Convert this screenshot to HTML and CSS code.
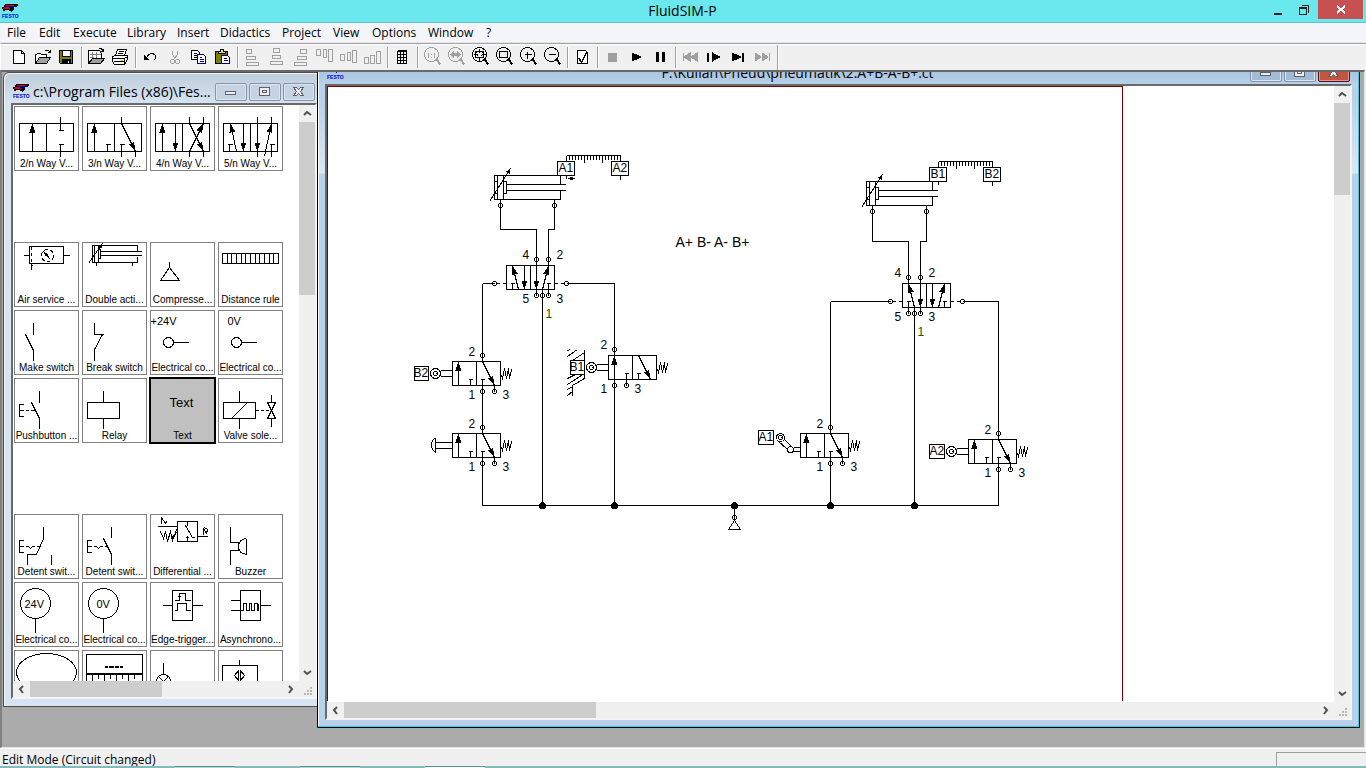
FILE: index.html
```
<!doctype html>

<html lang="en">

<head>
  <meta charset="utf-8">

  <title>FluidSIM-P</title>

  <link rel="stylesheet" href="styles.css">
</head>

<body>

  <!-- shared symbols -->
  <svg class="defs" width="0" height="0" aria-hidden="true">
    <defs>
      <marker id="head" markerUnits="userSpaceOnUse" markerWidth="10" markerHeight="8" refX="9" refY="4" orient="auto">
        <path d="M9 4L0 1V7Z" fill="#000" />
      </marker>
      <marker id="head-small" markerUnits="userSpaceOnUse" markerWidth="6" markerHeight="6" refX="5" refY="3" orient="auto">
        <path d="M5 3L0 1V5Z" fill="#000" />
      </marker>

      <g id="logo">
        <path d="M3 0H16V2H15V3H12V5H9V6H3V7H1V5H0V3H2V1H3Z" fill="#000" />
        <path d="M4 1H12V2H4ZM1 4H8V5H1ZM2 3H7V4H2Z" fill="#e00000" />
        <path d="M8 2H15V3H8ZM4 2H8V3H4Z" fill="#0000e0" />
        <path d="M9 5H12V6H11V7H10V8H9V7H7V6H9Z" fill="#000" />
        <text class="logo-text" x="0" y="14">FESTO</text>
      </g>

      <g id="cylinder">
        <path d="M66 9V0H0V24H66V15M3 0V24M9 0V24M0 6H3M0 18H3M9 6H12V18H9M12 9H71M12 15H71M6 24V30M60 24V30" />
        <path d="M-5 26L16 -7" marker-end="url(#head-small)" />
        <circle cx="6" cy="30" r="2" />
        <circle cx="60" cy="30" r="2" />
      </g>

      <g id="rule">
        <path d="M0 0H54M0 0V6M18 0V7M36 0V7M54 0V6M3 0V4M6 0V4M9 0V4M12 0V4M15 0V4M21 0V4M24 0V4M27 0V4M30 0V4M33 0V4M39 0V4M42 0V4M45 0V4M48 0V4M51 0V4" />
        <path d="M0 20V23M54 20V24" />
        <rect class="paper" x="-9" y="6" width="17" height="14" />
        <rect class="paper" x="45" y="6" width="17" height="14" />
      </g>

      <g id="spring">
        <path d="M0 12L2 17L4 7L6 17L8 7L9 17L11 8" />
      </g>

      <g id="roller">
        <circle cx="0" cy="0" r="5" />
        <circle cx="0" cy="0" r="2" />
        <path d="M0 0H1M5 -3H17M5 3H17" />
      </g>

      <g id="valve-closed">
        <path d="M0 0H48V24H0ZM24 0V24M16 18H20M18 18V24M28 18H32M30 18V30M42 24V30M30 -6V0" />
        <path d="M6 24V0" marker-end="url(#head)" />
        <path d="M30 0L42 24" marker-end="url(#head)" />
        <circle cx="30" cy="-6" r="2" />
        <circle cx="30" cy="30" r="2" />
        <circle cx="42" cy="30" r="2" />
        <use href="#spring" x="48" />
        <g class="port">
          <text x="16" y="-6">2</text>
          <text x="16" y="37">1</text>
          <text x="50" y="37">3</text>
        </g>
      </g>
    </defs>
  </svg>

  <header class="titlebar">
    <svg class="logo" width="18" height="15"><use href="#logo" /></svg>
    <h1>FluidSIM-P</h1>
    <div class="titlebar-buttons">
      <button aria-label="Minimize"><svg width="12" height="12"><path d="M2 9H10V11H2Z" fill="#222" /></svg></button>
      <button aria-label="Restore"><svg width="12" height="12" viewBox="-.5 -.5 12 12"><path d="M1 3H8V10H1ZM1 4H8M3 1H10V8" fill="none" stroke="#222" /></svg></button>
      <button class="close" aria-label="Close"><svg width="10" height="10"><path d="M1 1L9 8M9 1L1 8" stroke="#fff" stroke-width="2" /></svg></button>
    </div>
  </header>

  <nav class="menu">
    <button>File</button>
    <button>Edit</button>
    <button>Execute</button>
    <button>Library</button>
    <button>Insert</button>
    <button>Didactics</button>
    <button>Project</button>
    <button>View</button>
    <button>Options</button>
    <button>Window</button>
    <button>?</button>
  </nav>

  <div class="toolbar">
    <button aria-label="New"><svg viewBox="-.5 -.5 24 24"><path class="paper" d="M7 5H15L18 8V18H7Z" /><path d="M15 5V8H18" /></svg></button>
    <button aria-label="Open"><svg viewBox="-.5 -.5 24 24"><path class="paper" d="M5 18V9H6L7 8H10L11 9H16V12" /><path class="gray" d="M5 18L9 12H20L16 18Z" /><path d="M14 6Q17 3 20 7M20 4V7H17" /></svg></button>
    <button aria-label="Save"><svg viewBox="-.5 -.5 24 24"><path class="olive" d="M5 5H18V18H6L5 17Z" /><rect class="paper" x="8" y="5" width="8" height="6" /><path class="black" d="M8 14H16V18H8Z" /><path stroke="#fff" d="M14 15V17" /></svg></button>
    <span class="sep"></span>
    <button aria-label="Preview"><svg viewBox="-.5 -.5 24 24"><path class="paper" d="M4 18V5H15L17 8V12" /><path stroke="#808080" d="M5 9H16M5 12H9M8 6V13M12 6V12" /><path class="gray" d="M4 18L8 13H20L16 18Z" /><path d="M14 4Q16 1 19 6M19 3V6H16" /></svg></button>
    <button aria-label="Print"><svg viewBox="-.5 -.5 24 24"><path class="paper" d="M7 10L9 4H18L16 10Z" /><path d="M10 6H15M9 8H14" /><path class="paper" d="M4 11L7 10H19V14L16 19H6L4 16Z" /><path d="M4 13H16L19 11M5 16H16M16 13V18" /><path stroke="#e0d000" d="M11 15H14" /></svg></button>
    <span class="sep"></span>
    <button aria-label="Undo"><svg viewBox="-.5 -.5 24 24"><path d="M8 12Q12 6 16 9Q18 11 16 15" /><path class="black" d="M6 10V14H10Z" /></svg></button>
    <button aria-label="Cut" disabled><svg viewBox="-.5 -.5 24 24"><path d="M10 5V9L13 14M15 5V9L11 14" /><circle cx="10" cy="16" r="2" /><circle cx="15" cy="16" r="2" /></svg></button>
    <button aria-label="Copy"><svg viewBox="-.5 -.5 24 24"><path class="paper" d="M5 5H11L13 7V14H5Z" /><path d="M7 8H10M7 10H11M7 12H11" /><path class="paper navy" d="M11 9H17L19 11V18H11Z" /><path class="navy" d="M13 12H15M13 14H17M13 16H17" /></svg></button>
    <button aria-label="Paste"><svg viewBox="-.5 -.5 24 24"><path class="olive" d="M5 6H17V18H5Z" /><path class="yellow" d="M8 8V6H10V4H13V6H15V8Z" /><path class="paper navy" d="M11 10H17L19 12V18H11Z" /><path class="navy" d="M13 13H16M13 15H17" /></svg></button>
    <span class="sep"></span>
    <button aria-label="Align left" disabled><svg viewBox="-.5 -.5 24 24"><path d="M6 4H11V8H6ZM6 11H15V14H6ZM6 17H18V20H6Z" /></svg></button>
    <button aria-label="Align center" disabled><svg viewBox="-.5 -.5 24 24"><path d="M9 3H15V7H9ZM8 10H16V13H8ZM6 16H18V19H6Z" /></svg></button>
    <button aria-label="Align right" disabled><svg viewBox="-.5 -.5 24 24"><path d="M12 4H18V8H12ZM9 11H18V14H9ZM6 17H18V20H6Z" /></svg></button>
    <button aria-label="Align top" disabled><svg viewBox="-.5 -.5 24 24"><path d="M4 4H8V10H4ZM11 4H14V12H11ZM16 4H20V16H16Z" /></svg></button>
    <button aria-label="Align middle" disabled><svg viewBox="-.5 -.5 24 24"><path d="M4 9H8V15H4ZM11 7H14V15H11ZM16 5H20V17H16Z" /></svg></button>
    <button aria-label="Align bottom" disabled><svg viewBox="-.5 -.5 24 24"><path d="M4 12H8V18H4ZM10 10H14V18H10ZM16 6H20V18H16Z" /></svg></button>
    <span class="sep"></span>
    <button aria-label="Grid"><svg viewBox="-.5 -.5 24 24"><path d="M7 6H16V18H7ZM10 6V18M13 6V18M7 9H16M7 12H16M7 15H16" /><path d="M7 5H16" /></svg></button>
    <span class="sep"></span>
    <button aria-label="Actual size" disabled><svg viewBox="-.5 -.5 24 24"><circle cx="11" cy="9" r="7" /><path class="thick" d="M16 14L20 19" /><path d="M8 7V12M11 8V9M11 11V12M14 7V12" /></svg></button>
    <button aria-label="Fit width" disabled><svg viewBox="-.5 -.5 24 24"><circle cx="11" cy="9" r="7" /><path class="thick" d="M16 14L20 19" /><path class="fill" d="M6 9L9 6V8H13V6L16 9L13 12V10H9V12Z" /></svg></button>
    <button aria-label="Fit circuit"><svg viewBox="-.5 -.5 24 24"><circle cx="11" cy="9" r="7" /><path class="thick" d="M16 14L20 19" /><path d="M7 6H15V12H7ZM5 9H9M13 9H17M11 3V7M11 11V15M8 7L9 8M14 7L13 8M8 11L9 10M14 11L13 10" /></svg></button>
    <button aria-label="Zoom window"><svg viewBox="-.5 -.5 24 24"><circle cx="11" cy="9" r="7" /><path class="thick" d="M16 14L20 19" /><path d="M7 6H15V12H7Z" /></svg></button>
    <button aria-label="Zoom in"><svg viewBox="-.5 -.5 24 24"><circle cx="11" cy="9" r="7" /><path class="thick" d="M16 14L20 19" /><path d="M8 9H15M11 6V13" /></svg></button>
    <button aria-label="Zoom out"><svg viewBox="-.5 -.5 24 24"><circle cx="11" cy="9" r="7" /><path class="thick" d="M16 14L20 19" /><path d="M8 9H15" /></svg></button>
    <span class="sep"></span>
    <button aria-label="Check"><svg viewBox="-.5 -.5 24 24"><path class="paper" d="M7 5H15L17 7V18H7Z" /><path d="M8 13L11 17L16 7M9 13L11 15" /></svg></button>
    <span class="sep"></span>
    <button aria-label="Stop" disabled><svg viewBox="0 0 24 24"><path class="fill" d="M8 8H16V16H8Z" /></svg></button>
    <button aria-label="Start"><svg viewBox="0 0 24 24"><path class="fill" d="M8 8L17 12L8 16Z" /></svg></button>
    <button aria-label="Pause"><svg viewBox="-.5 -.5 24 24"><path class="fill" d="M8 7H10V16H8ZM14 7H16V16H14Z" /></svg></button>
    <span class="sep"></span>
    <button aria-label="Rewind" disabled><svg viewBox="0 0 24 24"><path class="fill" d="M5 8V16M12 8L6 12L12 16ZM19 8L13 12L19 16Z" /></svg></button>
    <button aria-label="Step"><svg viewBox="0 0 24 24"><path class="fill" d="M5 8H6V16H5ZM10 7V17M10 8L18 12L10 16Z" /></svg></button>
    <button aria-label="Next"><svg viewBox="0 0 24 24"><path class="fill" d="M6 8L15 12L6 16ZM16 8H17V16H16Z" /></svg></button>
    <button aria-label="Forward" disabled><svg viewBox="0 0 24 24"><path class="fill" d="M5 8L11 12L5 16ZM12 8L18 12L12 16ZM19 8V16" /></svg></button>
    <span class="sep end"></span>
  </div>

  <main class="workspace">

    <section class="window library">
      <div class="window-title">
        <svg class="logo" width="18" height="15"><use href="#logo" /></svg>
        <h2>c:\Program Files (x86)\Fes...</h2>
        <div class="window-buttons">
          <button aria-label="Minimize"><svg width="12" height="10" viewBox="-.5 -.5 12 10"><path d="M0 4H10V7H0Z" /></svg></button>
          <button aria-label="Maximize"><svg width="12" height="10" viewBox="-.5 -.5 12 10"><path d="M0 0H10V8H0ZM3 3H7V5H3Z" /></svg></button>
          <button aria-label="Close"><svg width="12" height="10" viewBox="-.5 -.5 12 10"><path d="M0 0H3L5 2L7 0H10L7 4L10 8H7L5 6L3 8H0L3 4Z" /></svg></button>
        </div>
      </div>
      <div class="window-body">
        <div class="view">
          <div class="tiles">
            <button class="tile"><svg viewBox=".5 .5 63 50"><path d="M5 17H59V45H5ZM32 17V45M46 10V24M44 24H49M46 38V50M44 38H49" /><path d="M18 45V17" marker-end="url(#head)" /></svg><span>2/n Way V...</span></button>
            <button class="tile"><svg viewBox=".5 .5 63 50"><path d="M5 17H59V45H5ZM32 17V45M23 38H28M25 38V45M39 10V17M37 38H42M39 38V50M53 45V50" /><path d="M12 45V17" marker-end="url(#head)" /><path d="M39 17L53 45" marker-end="url(#head)" /></svg><span>3/n Way V...</span></button>
            <button class="tile"><svg viewBox=".5 .5 63 50"><path d="M5 17H59V45H5ZM32 17V45M39 10V17M53 10V17M39 45V50M53 45V50" /><path d="M12 45V17" marker-end="url(#head)" /><path d="M25 17V45" marker-end="url(#head)" /><path d="M39 17L53 45" marker-end="url(#head)" /><path d="M39 45L53 17" marker-end="url(#head)" /></svg><span>4/n Way V...</span></button>
            <button class="tile"><svg viewBox=".5 .5 63 50"><path d="M5 17H59V45H5ZM32 17V45M9 38H14M11 38V45M39 10V17M53 10V17M39 45V50M46 50L47 45M51 38H56M53 38V50" /><path d="M18 45L12 17" marker-end="url(#head)" /><path d="M25 17V45" marker-end="url(#head)" /><path d="M39 17V45" marker-end="url(#head)" /><path d="M47 45L53 17" marker-end="url(#head)" /></svg><span>5/n Way V...</span></button>

            <button class="tile group"><svg viewBox=".5 .5 63 50"><path d="M15 4H49V21H15ZM9 13H15M49 13H55M17 21V27M16 23H18" /><path stroke-dasharray="3 3" d="M17 4V21" /><circle cx="33" cy="13" r="6" stroke-dasharray="4 2" /><path d="M36 17L29 9" marker-end="url(#head-small)" /></svg><span>Air service ...</span></button>
            <button class="tile group"><svg viewBox=".5 .5 63 50"><path d="M55 9V3H10V20H55V14M12 3V20M16 3V20M18 7V16H16V7ZM18 9H59M18 13H59M14 20V23M50 20V23" /><path d="M6 21L20 1" marker-end="url(#head-small)" /></svg><span>Double acti...</span></button>
            <button class="tile group"><svg viewBox=".5 .5 63 50"><path d="M19 19V25L29 38H10L19 25" /></svg><span>Compresse...</span></button>
            <button class="tile group"><svg viewBox=".5 .5 63 50"><path d="M4 11H60V21H4ZM9 11V21M13 11V21M18 11V21M23 11V21M27 11V21M32 11V21M37 11V21M41 11V21M46 11V21M51 11V21M55 11V21" /></svg><span>Distance rule</span></button>

            <button class="tile"><svg viewBox=".5 .5 63 50"><path d="M19 12V24M11 24L19 40V52" /></svg><span>Make switch</span></button>
            <button class="tile"><svg viewBox=".5 .5 63 50"><path d="M12 12V24H21M20 24L12 39V52" /></svg><span>Break switch</span></button>
            <button class="tile"><svg viewBox=".5 .5 63 50"><text x="0" y="14">+24V</text><circle cx="18" cy="32" r="5" /><path d="M23 32H38" /></svg><span>Electrical co...</span></button>
            <button class="tile"><svg viewBox=".5 .5 63 50"><text x="9" y="14">0V</text><circle cx="18" cy="32" r="5" /><path d="M23 32H38" /></svg><span>Electrical co...</span></button>

            <button class="tile"><svg viewBox=".5 .5 63 50"><path d="M9 26H5V38H9M5 32H9M11 32H14M16 32H20M25 12V24M17 24L25 40V52" /></svg><span>Pushbutton ...</span></button>
            <button class="tile"><svg viewBox=".5 .5 63 50"><path d="M5 24H37V40H5ZM21 12V24M21 40V52" /></svg><span>Relay</span></button>
            <button class="tile selected"><svg viewBox=".5 .5 63 50"><text class="big" x="19" y="28">Text</text></svg><span>Text</span></button>
            <button class="tile"><svg viewBox=".5 .5 63 50"><path d="M5 24H37V40H5ZM21 12V24M21 40V52M13 40L29 24M37 32H40M42 32H45M47 32H50M53 16V24M49 24H57L49 40H57ZM53 40V48" /></svg><span>Valve sole...</span></button>

            <button class="tile group"><svg viewBox=".5 .5 63 50"><path d="M9 26H5V38H9M5 32H9M11 32H14L16 34L18 32H20M22 32H25M29 12V24L22 40H13V52M37 40V52" /></svg><span>Detent swit...</span></button>
            <button class="tile group"><svg viewBox=".5 .5 63 50"><path d="M9 26H5V38H9M5 32H9M11 32H14L16 34L18 32H20M22 32H25M29 12V23M21 24L29 40V52" /></svg><span>Detent swit...</span></button>
            <button class="tile group"><svg viewBox=".5 .5 63 50"><path d="M27 7H47V27H27ZM7 12H27M10 17L13 24L15 17L17 27L20 17L22 26L27 13M20 25L27 17M37 7V11M35 11L42 23H44M37 27V22L35 24M37 22L39 24M47 22H57M11 9V3L15 9L16 7M53 20V14L56 19L57 15L54 13" /></svg><span>Differential ...</span></button>
            <button class="tile group"><svg viewBox=".5 .5 63 50"><path d="M12 12V28H21M21 36H12V52M28 24V40Q20 39 20 32Q20 25 28 24" /></svg><span>Buzzer</span></button>

            <button class="tile"><svg viewBox=".5 .5 63 50"><circle cx="21" cy="21" r="15" /><path d="M21 36V51" /><text x="10" y="25">24V</text></svg><span>Electrical co...</span></button>
            <button class="tile"><svg viewBox=".5 .5 63 50"><circle cx="21" cy="21" r="15" /><path d="M21 36V51" /><text x="14" y="25">0V</text></svg><span>Electrical co...</span></button>
            <button class="tile"><svg viewBox=".5 .5 63 50"><path d="M22 8H42V38H22ZM12 23H22M42 23H52M24 18H29V11H35V18H40M27 15L29 13L31 15M24 28H27V21H36V28H40" /></svg><span>Edge-trigger...</span></button>
            <button class="tile"><svg viewBox=".5 .5 63 50"><path d="M22 8H42V38H22ZM12 18H22M12 28H22M42 23H52M22 28H25V21H28V28H31V21H33V28H36V21H39V28H40V21" /></svg><span>Asynchrono...</span></button>

            <button class="tile" aria-label="Indicator"><svg viewBox=".5 .5 63 50"><ellipse cx="32" cy="22" rx="30" ry="19" /></svg></button>
            <button class="tile" aria-label="Display"><svg viewBox=".5 .5 63 50"><path d="M4 4H60V40H4ZM4 23H60M4 24H60M10 23V30M16 23V28M22 23V30M28 23V28M34 23V30M40 23V28M46 23V30M52 23V28" /><path stroke-width="2" stroke-dasharray="3 1 5 1 4 1" d="M22 16H41" /></svg></button>
            <button class="tile" aria-label="Lamp"><svg viewBox=".5 .5 63 50"><path d="M13 12V24M8 26L18 36M18 26L8 36" /><circle cx="13" cy="31" r="7" /></svg></button>
            <button class="tile" aria-label="Sensor"><svg viewBox=".5 .5 63 50"><path d="M4 15H39V40H4ZM21 9V15M20 20L16 25L20 30ZM22 20L26 25L22 30Z" /></svg></button>
          </div>
        </div>
        <div class="scroll vertical">
          <button aria-label="Scroll up"><svg viewBox="0 0 9 9"><path d="M1 6L4 3L8 6" /></svg></button>
          <div class="thumb library-rows"></div>
          <button class="last" aria-label="Scroll down"><svg viewBox="0 0 9 9"><path d="M1 3L4 6L8 3" /></svg></button>
        </div>
        <div class="scroll horizontal">
          <button aria-label="Scroll left"><svg viewBox="0 0 9 9"><path d="M6 1L3 4L6 8" /></svg></button>
          <div class="thumb library-cols"></div>
          <button class="last" aria-label="Scroll right"><svg viewBox="0 0 9 9"><path d="M3 1L6 4L3 8" /></svg></button>
        </div>
        <svg class="grip" width="16" height="16"><path d="M11 6h2v2h-2zM8 9h2v2h-2zM11 9h2v2h-2zM5 12h2v2h-2zM8 12h2v2h-2zM11 12h2v2h-2z" fill="#b8b8b8" /></svg>
      </div>
    </section>

    <section class="window circuit active">
      <div class="window-title">
        <svg class="logo" width="18" height="15"><use href="#logo" /></svg>
        <h2>F:\Kulian\Pneud\pneumatik\2.A+B-A-B+.ct</h2>
        <div class="window-buttons">
          <button aria-label="Minimize"><svg width="12" height="10" viewBox="-.5 -.5 12 10"><path d="M0 4H10V7H0Z" /></svg></button>
          <button aria-label="Restore"><svg width="12" height="10" viewBox="-.5 -.5 12 10"><path d="M0 0H10V8H0ZM3 3H7V5H3Z" /></svg></button>
          <button class="close" aria-label="Close"><svg width="12" height="10" viewBox="-.5 -.5 12 10"><path d="M0 0H3L5 2L7 0H10L7 4L10 8H7L5 6L3 8H0L3 4Z" /></svg></button>
        </div>
      </div>
      <div class="window-body">
        <div class="view">
          <svg class="drawing" width="1007" height="616" viewBox="326.5 85.5 1007 616">
            <path class="page" d="M327 700V86H1122V700" />

            <!-- supply line -->
            <path d="M482 283V361M482 391V427M482 457V505H998V463M542 295V505M614 283V505M830 301V427M830 457V505M914 307V505M998 301V433" />
            <g class="node">
              <circle cx="542" cy="505" r="3" />
              <circle cx="614" cy="505" r="3" />
              <circle cx="734" cy="505" r="3" />
              <circle cx="830" cy="505" r="3" />
              <circle cx="914" cy="505" r="3" />
            </g>
            <path d="M734 505V520L740 529H728L734 520" />
            <circle cx="734" cy="517" r="2" />

            <!-- cylinder A -->
            <use href="#cylinder" x="494" y="175" />
            <use href="#rule" x="566" y="155" />
            <path d="M574 178H567" marker-end="url(#head-small)" />
            <text x="558" y="171">A1</text>
            <text x="612" y="171">A2</text>
            <path d="M500 205V229H536V265M554 205V229H548V265" />

            <!-- cylinder B -->
            <use href="#cylinder" x="866" y="181" />
            <use href="#rule" x="938" y="161" />
            <text x="930" y="177">B1</text>
            <text x="984" y="177">B2</text>
            <path d="M872 211V241H908V283M926 211V241H920V283" />

            <text class="title" x="675" y="246">A+ B- A- B+</text>

            <!-- 5/2 valve A -->
            <path d="M506 265H554V289H506ZM530 265V289M510 283H514M512 283V289M546 283H550M548 283V295M536 289V295M542 289V295M482 283H494M566 283H614" />
            <path stroke-dasharray="3 3" d="M496 283H506M554 283H564" />
            <path d="M518 289L512 265" marker-end="url(#head)" />
            <path d="M524 265V289" marker-end="url(#head)" />
            <path d="M536 265V289" marker-end="url(#head)" />
            <path d="M542 289L548 265" marker-end="url(#head)" />
            <circle cx="536" cy="259" r="2" />
            <circle cx="548" cy="259" r="2" />
            <circle cx="536" cy="295" r="2" />
            <circle cx="542" cy="295" r="2" />
            <circle cx="548" cy="295" r="2" />
            <circle cx="494" cy="283" r="2" />
            <circle cx="566" cy="283" r="2" />
            <g class="port">
              <text x="522" y="258">4</text>
              <text x="556" y="258">2</text>
              <text x="522" y="302">5</text>
              <text x="556" y="302">3</text>
              <text class="supply" x="545" y="317">1</text>
            </g>

            <!-- 5/2 valve B -->
            <path d="M902 283H950V307H902ZM926 283V307M906 301H910M908 301V313M942 301H946M944 301V307M920 307V313M830 301H890M962 301H998" />
            <path stroke-dasharray="3 3" d="M892 301H902M950 301H960" />
            <path d="M914 307L908 283" marker-end="url(#head)" />
            <path d="M920 283V307" marker-end="url(#head)" />
            <path d="M932 283V307" marker-end="url(#head)" />
            <path d="M938 307L944 283" marker-end="url(#head)" />
            <circle cx="908" cy="277" r="2" />
            <circle cx="920" cy="277" r="2" />
            <circle cx="908" cy="313" r="2" />
            <circle cx="914" cy="313" r="2" />
            <circle cx="920" cy="313" r="2" />
            <circle cx="890" cy="301" r="2" />
            <circle cx="962" cy="301" r="2" />
            <g class="port">
              <text x="894" y="276">4</text>
              <text x="928" y="276">2</text>
              <text x="894" y="320">5</text>
              <text x="928" y="320">3</text>
              <text class="supply" x="917" y="335">1</text>
            </g>

            <!-- roller valve B2 and start button -->
            <use href="#valve-closed" x="452" y="361" />
            <use href="#roller" x="435" y="373" />
            <rect x="414" y="366" width="14" height="14" />
            <text x="413" y="376">B2</text>
            <use href="#valve-closed" x="452" y="433" />
            <path d="M435 442H452M435 448H452M435 437V452Q431 449 431 445Q431 440 435 437" />

            <!-- roller valve B1, actuated -->
            <path d="M608 355H656V379H608ZM632 355V379M624 373H628M626 373V385M636 373H640M638 373V379M584 349V378L572 385V395" />
            <path d="M567 350L570 349M567 356L577 349M572 360L584 352M567 378L575 374M567 384L584 373M567 389L572 386M567 395L572 391" />
            <path d="M614 379V355" marker-end="url(#head)" />
            <path d="M638 355L650 379" marker-end="url(#head)" />
            <circle cx="614" cy="349" r="2" />
            <circle cx="614" cy="385" r="2" />
            <circle cx="626" cy="385" r="2" />
            <use href="#spring" x="656" y="355" />
            <use href="#roller" x="591" y="367" />
            <rect x="570" y="360" width="14" height="14" />
            <text x="569" y="370">B1</text>
            <g class="port">
              <text x="600" y="348">2</text>
              <text x="600" y="392">1</text>
              <text x="634" y="392">3</text>
            </g>

            <!-- idle return roller valve A1 -->
            <use href="#valve-closed" x="800" y="433" />
            <circle cx="780" cy="437" r="4" />
            <circle cx="780" cy="437" r="2" />
            <circle cx="790" cy="449" r="3" />
            <path d="M784 439L791 446M778 441L787 449M793 447H800M793 451H800M780 437H781" />
            <rect x="758" y="430" width="15" height="14" />
            <text x="758" y="440">A1</text>

            <!-- roller valve A2 -->
            <use href="#valve-closed" x="968" y="439" />
            <use href="#roller" x="951" y="451" />
            <rect x="929" y="444" width="15" height="14" />
            <text x="929" y="454">A2</text>
          </svg>
        </div>
        <div class="scroll vertical">
          <button aria-label="Scroll up"><svg viewBox="0 0 9 9"><path d="M1 6L4 3L8 6" /></svg></button>
          <div class="thumb circuit-rows"></div>
          <button class="last" aria-label="Scroll down"><svg viewBox="0 0 9 9"><path d="M1 3L4 6L8 3" /></svg></button>
        </div>
        <div class="scroll horizontal">
          <button aria-label="Scroll left"><svg viewBox="0 0 9 9"><path d="M6 1L3 4L6 8" /></svg></button>
          <div class="thumb circuit-cols"></div>
          <button class="last" aria-label="Scroll right"><svg viewBox="0 0 9 9"><path d="M3 1L6 4L3 8" /></svg></button>
        </div>
        <svg class="grip" width="16" height="16"><path d="M11 6h2v2h-2zM8 9h2v2h-2zM11 9h2v2h-2zM5 12h2v2h-2zM8 12h2v2h-2zM11 12h2v2h-2z" fill="#b8b8b8" /></svg>
      </div>
    </section>

  </main>

  <footer class="status">
    <span>Edit Mode (Circuit changed)</span>
    <div class="panel"></div>
  </footer>
  <div class="taskbar">
    <div class="task"></div>
    <div class="task"></div>
    <div class="task current"></div>
  </div>

</body>

</html>
```

FILE: styles.css
```
* {
  box-sizing: border-box;
}

body {
  display: flex;
  flex-direction: column;
  height: 100vh;
  margin: 0;
  overflow: hidden;
  background-color: #f0f0f0;
  color: #000;
  font-family: "Open Sans", "Noto Sans", sans-serif;
  font-size: 12px;
}

button {
  margin: 0;
  padding: 0;
  border: 0;
  background: none;
  color: inherit;
  font: inherit;
}

svg {
  display: block;
  flex-shrink: 0;
  shape-rendering: crispEdges;
}

.defs {
  position: absolute;
}

.logo-text {
  fill: #0000e0;
  font: bold 5px "Liberation Sans", sans-serif;
}

/* application title bar */

.titlebar {
  display: grid;
  grid-template-columns: 100px 1fr 100px;
  height: 23px;
  padding: 0 3px 0 2px;
  border-bottom: 1px solid #62bfc5;
  background-color: #6be8ee;
}

.titlebar .logo {
  margin-top: 4px;
}

.titlebar h1 {
  margin: 0;
  font-size: 14px;
  font-weight: normal;
  line-height: 22px;
  text-align: center;
}

.titlebar-buttons {
  display: flex;
  justify-content: flex-end;
}

.titlebar-buttons button {
  display: flex;
  align-items: center;
  justify-content: center;
  width: 26px;
  height: 19px;
}

.titlebar-buttons .close {
  width: 45px;
  margin-left: 1px;
  background-color: #c75050;
}

/* menu */

.menu {
  display: grid;
  grid-template-columns: 32px 34px 54px 50px 43px 62px 51px 39px 56px 58px 20px;
  height: 20px;
  padding-left: 7px;
  border-bottom: 1px solid #e6e6e6;
  background-color: #f4f5f8;
}

.menu button {
  text-align: left;
  white-space: nowrap;
}

/* toolbar */

.toolbar {
  display: flex;
  align-items: center;
  height: 27px;
  padding-left: 5px;
  border-top: 1px solid #a0a0a0;
  border-left: 1px solid #fff;
  box-shadow: inset 0 1px #fff;
}

.toolbar button,
.toolbar svg {
  width: 24px;
  height: 24px;
}

.toolbar svg {
  fill: none;
  stroke: #000;
}

.toolbar button:disabled svg {
  stroke: #a0a0a0;
}

.toolbar .fill {
  fill: #000;
}

.toolbar button:disabled .fill {
  fill: #a0a0a0;
}

.toolbar .thick {
  stroke-width: 2;
}

.toolbar .black {
  fill: #000;
}

.toolbar .gray {
  fill: #a0a0a0;
}

.toolbar .olive {
  fill: #808000;
}

.toolbar .yellow {
  fill: #e8e040;
}

.toolbar .navy {
  stroke: #000080;
}

.paper {
  fill: #fff;
}

.sep {
  width: 2px;
  height: 21px;
  margin: 0 1px 0 3px;
  border-left: 1px solid #a0a0a0;
  background-color: #fff;
}

.sep.end {
  height: 25px;
}

/* mdi area */

.workspace {
  position: relative;
  flex: 1;
  margin-right: 1px;
  overflow: hidden;
  border: solid;
  border-width: 2px 1px 1px 2px;
  border-color: #696969 #e3e3e3 #e3e3e3 #808080;
  background-color: #ababab;
}

.window {
  position: absolute;
  display: flex;
  flex-direction: column;
  padding: 0 7px 7px;
  border: 1px solid #4d4d4d;
  border-radius: 6px 6px 0 0;
  background: linear-gradient(#bfcddb, #d7e4f2 31px);
  box-shadow: inset 1px 1px #eef4fa;
}

.window.active {
  border-color: #000;
  background: linear-gradient(#98b4d2, #b9d1ea 31px, #b9d1ea 45px, #dbe7f4 119px, #b9d1ea 120px);
  box-shadow: inset -1px -1px #29cfe6, inset 1px 0 #fff;
}

.library {
  top: 0;
  bottom: 40px;
  left: 1px;
  width: 322px;
}

.circuit {
  top: -19px;
  right: 4px;
  bottom: 19px;
  left: 315px;
}

.window-title {
  display: flex;
  align-items: center;
  gap: 2px;
  height: 30px;
  padding: 7px 2px 0;
}

.window-title h2 {
  flex: 1;
  margin: 0;
  overflow: hidden;
  font-size: 14px;
  font-weight: normal;
  line-height: 22px;
  text-align: center;
  white-space: nowrap;
}

.library h2 {
  text-align: left;
}

.window-buttons {
  display: flex;
  gap: 2px;
}

.window-buttons button {
  display: flex;
  align-items: center;
  justify-content: center;
  width: 32px;
  height: 18px;
  border: 1px solid #8594aa;
  border-radius: 2px;
  background-color: #c5d3e2;
  box-shadow: inset 0 0 0 1px #dbe6f1;
}

.window-buttons svg {
  fill: #eee;
  stroke: #5a6070;
}

.active .window-buttons button {
  background-color: #a3bcd6;
}

.active .window-buttons .close {
  border-color: #50141c;
  background-color: #c2553f;
  box-shadow: inset 0 0 0 1px #e0998c;
}

.window-body {
  display: grid;
  flex: 1;
  grid-template-columns: minmax(0, 1fr) 16px;
  grid-template-rows: minmax(0, 1fr) 16px;
  min-height: 0;
  border: 2px solid;
  border-color: #696969 #f4f4f4 #f4f4f4 #696969;
  background-color: #f0f0f0;
}

.view {
  overflow: hidden;
  background-color: #fff;
}

/* scroll bars */

.scroll {
  display: flex;
}

.scroll.vertical {
  flex-direction: column;
}

.scroll button {
  display: flex;
  align-items: center;
  justify-content: center;
  width: 16px;
  height: 17px;
}

.scroll.horizontal button {
  width: 17px;
  height: 16px;
}

.scroll svg {
  width: 9px;
  height: 9px;
  fill: none;
  stroke: #505050;
  stroke-width: 2;
  shape-rendering: auto;
}

.scroll .last {
  margin-top: auto;
}

.scroll.horizontal .last {
  margin-top: 0;
  margin-left: auto;
}

.thumb {
  background-color: #cdcdcd;
}

.library-rows {
  height: 30%;
}

.library-cols {
  width: 46%;
}

.circuit-rows {
  height: 15%;
}

.circuit-cols {
  width: 25%;
}

/* component library */

.tiles {
  display: grid;
  grid-template-columns: repeat(4, 65px);
  gap: 3px;
  padding: 1px;
}

.tile {
  display: flex;
  flex-direction: column;
  height: 65px;
  border: 1px solid #808080;
  background-color: #fff;
  font: 10px/13px "Liberation Sans", sans-serif;
}

.tile.group {
  margin-top: 68px;
}

.tile.selected {
  border-color: #000;
  outline: 1px solid #000;
  background-color: #c0c0c0;
}

.tile svg {
  width: 63px;
  height: 50px;
  fill: none;
  stroke: #000;
}

.tile span {
  width: 63px;
  text-align: center;
  white-space: nowrap;
}

.tile text {
  fill: #000;
  stroke: none;
  font-size: 11px;
}

.tile .big {
  font-size: 13px;
}

/* circuit drawing */

.drawing {
  fill: none;
  stroke: #000;
}

.drawing text,
.port text {
  fill: #000;
  stroke: none;
  font: 12px "Liberation Sans", sans-serif;
}

.drawing .title {
  font-size: 14px;
}

.drawing .supply {
  fill: #006400;
}

.node {
  fill: #000;
}

.page {
  stroke: #800000;
}

/* status line */

.status {
  display: flex;
  justify-content: space-between;
  height: 18px;
  padding-left: 2px;
  border-top: 1px solid #fff;
  line-height: 22px;
}

.panel {
  width: 90px;
  margin-top: 3px;
  border: solid #a0a0a0;
  border-width: 1px 0 0 1px;
}

.taskbar {
  display: flex;
  gap: 65px;
  height: 2px;
  padding-left: 175px;
  background-color: #86b9bb;
}

.task {
  width: 60px;
  border-top: 1px solid #5d8f92;
  background-color: #b5d5d6;
}

.task.current {
  background-color: #fff;
}
```
